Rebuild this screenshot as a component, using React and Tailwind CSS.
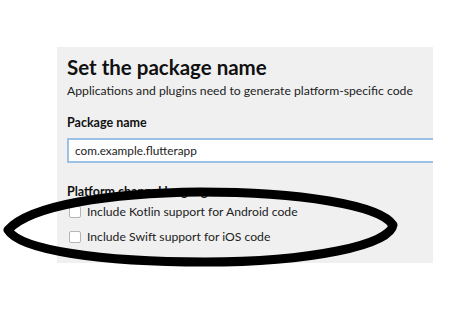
export default function App() {
  return (
    <div className="relative w-[474px] h-[330px] bg-white overflow-hidden" style={{ fontFamily: 'Lato, "Noto Sans", sans-serif' }}>
      <div className="pt-[47px] pl-[57px]">
        <div className="w-[376px] h-[216px] bg-[#f0f0f0] overflow-hidden pl-[10px] text-[#111]">
          <div className="pt-[7px] text-[20.5px] font-bold leading-[26px] whitespace-nowrap">Set the package name</div>
          <div className="mt-[2px] text-[12.2px] leading-[17px] text-[#222] whitespace-nowrap">Applications and plugins need to generate platform-specific code</div>
          <div className="mt-[15px] text-[12.5px] font-bold leading-[17px]">Package name</div>
          <div className="mt-[7px] w-[400px] h-[25px] bg-white border-2 border-[#9cc0e6] flex items-center pl-[6px] text-[11.8px] text-[#222]">com.example.flutterapp</div>
          <div className="mt-[20px] text-[12.5px] font-bold leading-[17px]">Platform channel language</div>
          <div className="mt-[5px] flex flex-col gap-[11px] pl-[2px] text-[12.2px] text-[#222]">
            <label className="flex items-center gap-[6px] h-[14px]">
              <span className="w-[12px] h-[12px] border border-[#b5b5b5] rounded-[2px] bg-white" />
              <span>Include Kotlin support for Android code</span>
            </label>
            <label className="flex items-center gap-[6px] h-[14px]">
              <span className="w-[12px] h-[12px] border border-[#b5b5b5] rounded-[2px] bg-white" />
              <span>Include Swift support for iOS code</span>
            </label>
          </div>
        </div>
      </div>
      <svg className="absolute left-0 top-0" width="474" height="330" viewBox="0 0 474 330">
        <path d="M8 230 C 30 205, 110 193, 200 192 C 300 192, 380 205, 393 225 C 390 245, 310 262, 205 262 C 100 262, 20 250, 8 230 Z" fill="none" stroke="#000" strokeWidth="9" strokeLinejoin="round" />
      </svg>
    </div>
  );
}
